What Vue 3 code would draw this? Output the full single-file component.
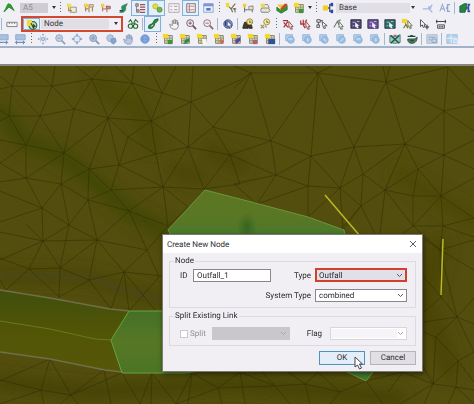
<script setup>
import { h, ref } from 'vue'

const nodeId = ref('Outfall_1')
const nodeType = ref('Outfall')
const systemType = ref('combined')
const split = ref(false)

// Each icon is a list of [path, fill, stroke, width] layers on a 14 by 14 canvas.
const table = (accent, mark = 'M7 8h5v5H7z') => [
  ['M3 3h9v9H3z', '#e4e2b8', '#77755a'],
  ['M3 6h9M3 9h9M6 3v9M9 3v9', 'none', '#8f8d70'],
  ['M1 1h6v5H1z', '#f4d82f', 'none'],
  [mark, accent, 'none'],
]
const blob = (mark) => [
  ['M2 2h8v7H2z', '#b4cfea', '#8fb4da'],
  ['M8 4a4 4 0 1 1 0 8a4 4 0 1 1 0-8z', '#9cc0e4', '#84aed8'],
  [mark, 'none', '#e4f0fb'],
]
const lens = (mark, color, glass) => [
  ['M6 2a4 4 0 1 1 0 8a4 4 0 1 1 0-8z', glass, color],
  ['M9 9l4 4', 'none', color, 2],
  [mark, 'none', color],
]
const frame = (fill) => [
  ['M1 2h12v10H1z', fill, '#2c2a3d'],
  ['M3 5h3M8 4h3M3 9h2', 'none', '#b9b5d8', 1.2],
  ['M6 5l5 4l-2 0l1 3h-2l-1-2l-1 1z', '#f2f1fa', 'none'],
]
const pan = (color, fill) => [
  ['M4 8L2 7l1 4l3 2h4l2-3V5l-1 0v3V3H9v4V2H7v5L6 3H5v6z', fill, color],
]

const icons = {
  arrow: [['M1 11C3 9 4 5 6 2l3 1l4 7l-6-4l-5 5z', '#2f9a2e', '#2b8a2c']],
  newItem: [['M5 6h7v6H5z', '#f3eed2', '#8a8578'], ['M1 2h5v4H1z', '#f4dc4a', 'none'], ['M3 6v4h4', 'none', '#b3952c', 1.3]],
  tree1: [['M3 5v6M7 4v8M11 3v8M3 8h3', 'none', '#a8875a', 1.4], ['M1 2h5v4H1z', '#f0d048', 'none'], ['M7 3h5v3H8z', '#e6cfae', '#b18d5c']],
  tree2: [['M3 5v6M3 8h5M8 4v8', 'none', '#b08a72', 1.4], ['M1 2h4v4H1z', '#f0d048', 'none'], ['M7 5h5v3H8z', '#c98d86', '#a85a54']],
  bird: [['M3 12c5 1 8-2 7-6l2-4l-5 2c-2 1-2 2-1 5z', '#2d8a65', '#3d8d6c'], ['M3 10h4', 'none', '#184e3c', 1.5]],
  list: [['M2 2h3v3H2zM3 9h3v3H3z', '#b8a8a0', '#80706c'], ['M3 5v5', 'none', '#777'], ['M7 3h6M7 6h6M7 9h6M7 12h6', 'none', '#a04e52', 1.4]],
  shapes: [['M5 2a3 3 0 1 1 0 6a3 3 0 1 1 0-6z', '#e0e03a', '#b8bd40'], ['M10 6a3 3 0 1 1 0 6a3 3 0 1 1 0-6z', '#6db54b', '#5b9a45']],
  panel: [['M1 2h12v10H1z', '#f5f2f6', '#aaa0a8'], ['M3 5h2M7 5h4M3 9h2M7 9h4', 'none', '#a98a90']],
  report: [['M2 2h10v10H2z', '#f6eeee', '#77646a'], ['M5 3v8', 'none', '#77646a'], ['M3 5h1M6 5h5M3 9h1M6 9h5', 'none', '#b27b80']],
  window: [['M2 2h11v10H2z', '#e8eefa', '#8a9ed0'], ['M2 2h11v3H2z', '#7b96d4', 'none'], ['M5 7h5v3H5z', '#5479c2', 'none']],
  linkA: [['M3 4l4 4l2 4M7 8l5-6M9 8h4M11 7l1 5', 'none', '#746d52', 1.3], ['M1 1h4v5H1z', '#f3d738', 'none']],
  linkB: [['M3 12V6M3 9h8M12 4v8', 'none', '#77756e', 1.3], ['M1 2h4v4H1z', '#eed237', 'none'], ['M8 5h5v4H8z', '#e4e2d6', '#88877c']],
  stack: [['M3 7h8l2 3l-2 2H3l-1-2z', '#e6e2d4', '#7b776c'], ['M7 3h3l2 4', 'none', '#7b776c'], ['M2 2h5v4H2z', '#f0d84b', 'none']],
  flag: [['M1 6l5 4l7-6v5l-7 4l-5-3z', '#2f9a35', '#34742b'], ['M1 3h8l-3 5z', '#f0ca2c', 'none'], ['M5 8l5-6h3v2l-7 6z', '#d2432d', 'none']],
  tableGreen: table('#3a9739'),
  tableTeal: table('#248c4d', 'M6 13l1-5l5-2v4z'),
  tableHand: table('#f8f7f0', 'M7 7h5l1 6H8z'),
  tableRed: table('#c5715a', 'M10 7l3 3l-3 3l-3-3z'),
  tableNote: table('#5545a5', 'M6 8l6-3v4l-5 4z'),
  tableRose: table('#ad6078'),
  tableBlue: table('#2b5597', 'M5 7h8v6H5z'),
  base: [['M6 7h3M9 7V3h3M9 7v4h3', 'none', '#50516b', 1.6], ['M1 4h6v6H1z', '#efd128', 'none'], ['M10 1h3v4h-3z', '#2c46ae', 'none'], ['M10 9h3v4h-3z', '#2c46ae', 'none']],
  branch: [['M1 8h7M8 8l4-5M8 8l4 4', 'none', '#a5bade', 1.6], ['M7 5h4v3H7z', '#a8bddd', 'none']],
  branchA: [['M1 11l3-8l3 8M2 8h4', 'none', '#9dadcc', 1.3], ['M8 7h2M10 7V3h3M10 7v4h3', 'none', '#88a7d5', 1.6]],
  branchG: [['M1 5l5-3h3v5L7 12H1z', '#268342', '#1a6333'], ['M8 7h3V3h2M11 7v4h2', 'none', '#3350a0', 2]],
  ruler: [['M1 5h12v5H1z', '#f5f3f5', '#777'], ['M4 5v2M7 5v2M10 5v2', 'none', '#777']],
  pick: [['M8 3a4.500 4.500 0 1 1 0 9a4.500 4.500 0 0 1 0-9z', '#cfe0bd', '#3f6b34', 1.5], ['M1 1h6v7H1z', '#ebdb4b', 'none'], ['M6 5l3 6V7l2 2', 'none', '#244c1c', 1.4]],
  group: [['M2 5l2-3l2 3M8 5l2-3l3 3', 'none', '#286b35', 1.3], ['M4 7a2.500 2.500 0 1 1 0 5a2.500 2.500 0 1 1 0-5zM10 7a2.500 2.500 0 1 1 0 5a2.500 2.500 0 1 1 0-5zM5 6h5', '#e4f0e4', '#296b37', 1.3]],
  pencil: [['M2 12c-1-3 1-5 4-5l3-5l4-1c0 3-2 4-4 5c0 4-3 7-7 6z', '#2b8b43', '#16552a'], ['M5 10l2-2', 'none', '#bfe3c4', 1.2]],
  hand: pan('#8a8583', '#f4f2f4'),
  zoomIn: lens('M4 6h4M6 4v4', '#6b5058', '#f1edf1'),
  zoomOut: lens('M4 6h4', '#8b6570', '#f1edf1'),
  info: [['M7 2a5 5 0 1 1 0 10a5 5 0 1 1 0-10z', '#7c8cbc', '#50649a'], ['M6 3v8l2-2l1 3l2-1l-1-2h2z', '#f5f5fc', '#344070'], ['M4 4v5', 'none', '#2c3c74', 1.5]],
  find: [['M1 11l2-6h3l1 3v4H1zM7 8h4l1 4H8z', '#423b2d', '#28251e'], ['M9 1a3.500 3.500 0 1 1 0 7a3.500 3.500 0 1 1 0-7z', '#f3e38a', '#927f35'], ['M9 3v2h2', 'none', '#57502c']],
  track: [['M2 8l4 4M2 12l4-4M7 9l2 2', 'none', '#a09060', 1.4], ['M9 1a3.500 3.500 0 1 1 0 7a3.500 3.500 0 1 1 0-7z', '#f5e9a4', '#9c8632'], ['M9 3v2h2', 'none', '#57502c']],
  cutA: [['M1 3h6M2 11l5-7M2 5l5 6', 'none', '#a8343c', 1.4], ['M8 4l5 6h-2l1 3h-2l-1-3l-1 1z', '#f6eaea', '#8c3a3e']],
  cutB: [['M2 3v4h5M5 2v6l2 4M9 2L7 5', 'none', '#b03a42', 1.5], ['M8 4l5 6h-2l1 3h-2l-1-3l-1 1z', '#f6eaea', '#8c3a3e']],
  nodesA: [['M1 2h4v3H1zM1 8h3v3H1zM5 3h3M3 5v3', '#e5e2e1', '#4b474d'], ['M7 4l6 5h-3l1 3H9L8 9z', '#fff', '#4b474d']],
  nodesB: [['M1 11l4-7l4 7M5 4l4-2', 'none', '#6a7566', 1.2], ['M7 4l5 6h-2l1 3H9L8 10l-1 1z', '#eef4ea', '#5a6a54']],
  frameA: frame('#4e4770'),
  frameB: frame('#6c50a0'),
  frameC: frame('#267267'),
  pair: [['M3 12l3-5M5 6l3 6', 'none', '#68752e', 1.3], ['M1 1h6v5H1z', '#f0d535', 'none'], ['M8 3l5 6h-2l1 3h-2l-1-3l-1 1z', '#f2efda', '#66603a']],
  cursorPlus: [['M3 2v8l2-2l1 3l2-1l-1-2h2z', '#fff', '#3c3b42'], ['M8 10.500h5M10.500 8v5', 'none', '#3c3b42', 1.4]],
  measure: [['M3 8h8v4H3z', '#eeeaee', '#49464b'], ['M1 4h12M2 2v4M12 2v4M5 9v2M7 9v2M9 9v2', 'none', '#49464b', 1.2]],
  screen: [['M2 2h11v6H2z', '#a9c0de', '#8ba6cc'], ['M1 11h12M3 9v4M11 9v4', 'none', '#6f91c0', 1.3]],
  move: [['M7 5a2 2 0 1 1 0 4a2 2 0 1 1 0-4z', '#c4d3e8', '#8ba6c8'], ['M7 1v2M7 11v2M1 7h2M11 7h2', 'none', '#8ba6c8', 1.8], ['M4 3v8M10 3v8', 'none', '#b4c6de']],
  lensBlue: lens('M4 6h4', '#8c9fbd', '#bfd0e7'),
  target: [['M7 3a4 4 0 1 1 0 8a4 4 0 1 1 0-8z', '#dfe8f4', '#93abcc'], ['M7 1v3M7 10v3M1 7h3M10 7h3', 'none', '#839fc4', 1.6]],
  lensTarget: lens('M6 4v4M4 6h4', '#8497b6', '#a9c2df'),
  globeHand: [['M6 2a4 4 0 1 1 0 8a4 4 0 1 1 0-8z', '#b4cae4', '#93aed0'], ['M7 7l5-1l1 4l-3 3l-3-2z', '#85a3cb', '#7a98c0']],
  handBlue: pan('#8da1c0', '#b8cae2'),
  globe: [['M7 2a5 5 0 1 1 0 10a5 5 0 1 1 0-10z', '#719ada', '#7fa0d6'], ['M4 5h6M4 9h6M7 3v8', 'none', '#8aade4']],
  blobA: blob('M5 7h5'),
  blobB: blob('M8 6v4'),
  blobC: blob('M6 6l4 4'),
  blobD: blob('M6 10l4-4'),
  cross: [['M1 3l5 1l2 0l5-2v9l-5 1H6l-5-1z', '#8fd0c4', '#47766b'], ['M2 3l10 9M12 3L2 12', 'none', '#2a4c46', 1.6], ['M5 2h4L7 5z', '#ca5959', 'none']],
  kettle: [['M2 7h8l3-2c0 4-2 7-6 7s-5-2-5-5z', '#4c7c64', '#244d39'], ['M2 4h9M5 3h3M5 9h4', 'none', '#254b3a', 1.4]],
  sheet: [['M1 2h12v10H1z', '#c6d4e3', '#a8b9cc'], ['M3 5h8M3 8h3M7 7h5v4H7z', 'none', '#88a4c2']],
  cells: [['M1 2h12v10H1z', '#b4d0ea', '#9bbcdc'], ['M1 6h12M6 2v10M9 8h4v3H9z', 'none', '#e3f1fb', 1.2]],
}

const row = (text) => text.split(' ').map((k) => ({ kind: k === '|' ? 'sep' : k === ':' ? 'grip' : k.startsWith('*') ? 'on' : 'icon', name: k.replace('*', '') }))
const topA = row(': newItem tree1 tree2 bird *list *shapes panel *report window : linkA linkB stack flag tableGreen')
const topB = row('branch branchA | branchG')
const midA = row('group | *pencil')
const midB = row('hand zoomIn zoomOut | info | find track : cutA cutB nodesA nodesB frameA frameB frameC pair cursorPlus measure')
const low = row('screen screen : move lensBlue target lensTarget globeHand handBlue globe : tableGreen tableTeal tableHand tableRed tableNote tableRose tableBlue | blobA blobB blobC blobD blobA blobB | cross kettle | sheet | cells')

function draw(t) {
  if (t.kind === 'sep') return h('i', { class: 'sep' })
  if (t.kind === 'grip') return h('i', { class: 'grip' })
  return h('button', { type: 'button', class: ['tool', { on: t.kind === 'on' }], 'aria-label': t.name }, [
    h('svg', { viewBox: '0 0 14 14', class: 'glyph' }, icons[t.name].map(([d, fill, stroke, w]) => h('path', { d, fill, stroke, 'stroke-width': w || 1 }))),
  ])
}
const Tools = (props) => props.items.map(draw)
Tools.props = ['items']

const mesh = [
  'M0 89L12 86L52 86L92 79L132 83L162 93L191 102L240 80L251 73L318 73L386 82L444 111L474 104',
  'M12 86L0 76M12 86L19 66M12 86L9 116L0 110M12 86L40 116L9 116L26 145L0 140M9 116L0 121',
  'M52 86L55 66M52 86L30 66M52 86L40 116L26 145M52 86L74 109L40 116L64 153L26 145L26 178L0 163L26 145',
  'M92 79L76 66M92 79L103 66M92 79L74 109L64 153L108 118L74 109M92 79L108 118L132 83L134 66M132 83L115 66',
  'M132 83L151 121L162 93L149 66M162 93L176 66M191 102L193 66M151 121L191 102L188 147L151 121L108 118L128 137L151 121L156 154L128 137',
  'M191 102L213 127L188 147L230 155L213 127L240 94L251 73M213 127L271 141L230 155L204 189L188 147L163 187L156 154L188 147',
  'M108 118L119 165L128 137M108 118L89 169L64 153L61 184L26 178L64 153M89 169L61 184L88 200L111 190L89 169L119 165L156 154M89 169L88 200',
  'M119 165L111 190L163 187L119 165M163 187L204 189L240 184L230 155M163 187L129 211L111 190M163 187L168 226L129 211L88 200L69 225L42 208L61 184L69 225',
  'M26 178L0 182M26 178L42 208L0 191M42 208L0 222M42 208L43 241L69 225L97 240L129 211L147 250L168 226L188 207L163 187M88 200L97 240',
  'M251 73L234 66M251 73L234 88M251 73L271 141L318 73L311 156L271 141L276 175L311 156L354 147L318 73L332 66M318 73L306 66',
  'M386 82L354 147L405 144L386 82L383 66M386 82L390 66M386 82L448 67L444 111L405 144L444 155L444 111L474 131M448 67L474 95',
  'M311 156L308 186L276 175L230 155M276 175L234 184L257 204L276 175M308 186L257 204M308 186L308 217M308 186L340 188L311 156M340 188L354 147L363 174L340 188L308 217M340 188L361 206L363 174L405 144L385 190L363 174',
  'M405 144L418 169L444 155L474 140M444 155L474 169M444 155L441 196L418 169L385 190L361 206L340 230M385 190L413 196L418 169M413 196L441 196L474 178M413 196L413 226L441 196L443 226L413 226L385 190L380 234M441 196L474 218L443 226L474 237M443 226L440 250L413 226L402 234',
  'M340 188L343 230L361 206L375 234M423 238L440 250L474 240M440 250L474 270M440 250L457 317L474 298M423 276L441 297L440 250M423 313L441 297L457 317L423 322M457 317L474 324M457 317L436 337L423 332M457 317L474 352M436 337L458 361L474 352M436 337L433 384L458 361L474 382M458 361L456 387L433 384L423 366M456 387L474 404M456 387L448 404M433 384L424 404M456 387L474 390',
  'M0 260L43 241L29 269L0 258M0 232L43 241L26 224M43 241L60 268L29 269L6 290L0 280M29 269L59 297L60 268L97 240L43 241M60 268L89 280L59 297M60 268L69 225M97 240L124 272L89 280L97 240L147 250L124 272L162 276M89 280L111 309L124 272L129 311L159 277L147 250M124 272L155 310',
  'M0 381L50 359L71 395L104 370L111 404M50 359L41 390L0 380M41 390L0 404M41 390L44 404M41 390L71 395L60 404M71 395L78 404M71 395L122 373L140 404L152 373L151 404M152 373L176 404L192 373L218 388L176 404',
  'M192 373L188 404M218 388L222 404M218 388L240 372L275 386L218 388M240 372L245 404M275 386L262 372M275 386L290 404M275 386L305 384L288 372M305 384L318 372L340 392L305 384L310 404M340 392L330 404M340 392L366 381L383 404M366 381L403 372L433 384L400 404M403 372L388 392',
].join('')
</script>

<template>
  <main class="app">
    <header class="toolbars">
      <div class="bar">
        <Tools :items="[{ kind: 'icon', name: 'arrow' }]" />
        <div class="combo size">
          <select aria-label="Size" disabled><option>A5</option></select>
          <svg class="tri" viewBox="0 0 6 4"><path d="M1 0h4L3 3z" /></svg>
        </div>
        <Tools :items="topA" />
        <svg class="tri" viewBox="0 0 6 4"><path d="M1 0h4L3 3z" /></svg>
        <Tools :items="[{ kind: 'grip' }, { kind: 'icon', name: 'base' }]" />
        <div class="combo scenario">
          <select aria-label="Scenario"><option>Base</option></select>
          <svg class="tri" viewBox="0 0 6 4"><path d="M1 0h4L3 3z" /></svg>
        </div>
        <Tools :items="topB" />
      </div>
      <div class="bar">
        <Tools :items="[{ kind: 'sep' }, { kind: 'icon', name: 'ruler' }]" />
        <div class="combo object">
          <Tools :items="[{ kind: 'on', name: 'pick' }]" />
          <select aria-label="Object"><option>Node</option></select>
          <svg class="tri" viewBox="0 0 6 4"><path d="M1 0h4L3 3z" /></svg>
        </div>
        <Tools :items="midA" />
        <i class="space"></i>
        <Tools :items="midB" />
      </div>
      <div class="bar low"><Tools :items="low" /></div>
    </header>
    <div class="strip"></div>

    <section class="map">
      <svg class="terrain" viewBox="0 66 474 338" preserveAspectRatio="xMinYMin slice">
        <defs>
          <filter id="soft" x="-50%" y="-50%" width="200%" height="200%"><feGaussianBlur stdDeviation="7" /></filter>
          <linearGradient id="pond" gradientUnits="userSpaceOnUse" x1="0" y1="190" x2="0" y2="240">
            <stop offset="0" stop-color="#5c7623" /><stop offset=".6" stop-color="#587724" /><stop offset="1" stop-color="#437a30" />
          </linearGradient>
          <radialGradient id="shade">
            <stop offset="0" stop-color="#2c5c1e" stop-opacity=".7" /><stop offset="1" stop-color="#2c5c1e" stop-opacity="0" />
          </radialGradient>
          <linearGradient id="outlet" x1="0" y1="0" x2="0" y2="1">
            <stop offset="0" stop-color="#447027" /><stop offset=".5" stop-color="#567825" /><stop offset="1" stop-color="#4c7425" />
          </linearGradient>
          <linearGradient id="channel" x1="0" y1="0" x2="0" y2="1">
            <stop offset="0" stop-color="#3f4f0d" /><stop offset=".5" stop-color="#525406" /><stop offset="1" stop-color="#575707" />
          </linearGradient>
        </defs>
        <path d="M0 66h474v338H0z" fill="#534e0d" />
        <g filter="url(#soft)" fill="none" stroke-linecap="round">
          <path d="M0 110L25 142L62 156L98 185L130 212L165 232" stroke="#384109" stroke-width="15" opacity=".7" />
          <path d="M100 85L140 110L152 145" stroke="#403f09" stroke-width="18" opacity=".5" />
          <path d="M175 170L200 178M210 150L240 165" stroke="#433b08" stroke-width="16" opacity=".5" />
          <path d="M0 275L90 278L160 300" stroke="#443f0a" stroke-width="12" opacity=".7" />
          <path d="M0 382L90 392L230 384L400 398" stroke="#3b3d09" stroke-width="13" opacity=".7" />
          <path d="M440 245L425 300L450 370" stroke="#444009" stroke-width="20" opacity=".55" />
          <path d="M400 175L474 220" stroke="#47440b" stroke-width="16" opacity=".5" />
        </g>
        <path :d="mesh" fill="none" stroke="#2f2b05" opacity=".5" />
        <path d="M0 290L50 298L110 309L129 311L111 340L122 372L105 370L50 359L0 352z" fill="url(#channel)" />
        <path d="M0 290L50 298L110 309L129 311M0 352L50 359L105 370L122 372" fill="none" stroke="#6f704a" stroke-width="1.5" />
        <path d="M0 321L50 329L95 339L111 340" fill="none" stroke="#687a1a" />
        <path d="M129 311H200V371L185 373H122L111 340z" fill="url(#outlet)" stroke="#67a53e" />
        <path d="M168 230L205 190L240 199L308 217L344 230L374 371L366 381L345 371L180 250z" fill="url(#pond)" stroke="#6b963e" />
        <ellipse cx="247" cy="227" rx="10" ry="14" fill="url(#shade)" />
        <path d="M325 195L360 236M443 239L441 295" fill="none" stroke="#bcb924" stroke-width="1.5" />
      </svg>

      <form class="dialog" role="dialog" aria-labelledby="dialog-title" @submit.prevent>
        <div class="titlebar">
          <h1 id="dialog-title">Create New Node</h1>
          <button type="button" class="close" aria-label="Close">
            <svg viewBox="0 0 8 8"><path d="M1 1l6 6M7 1L1 7" /></svg>
          </button>
        </div>
        <div class="body">
          <fieldset>
            <legend>Node</legend>
            <div class="fields node">
              <label for="id">ID</label>
              <input id="id" v-model="nodeId" type="text" />
              <label class="right" for="type">Type</label>
              <div class="drop picked">
                <select id="type" v-model="nodeType"><option>Outfall</option></select>
                <svg class="chev" viewBox="0 0 7 5"><path d="M1 1l2.500 2.500L6 1" /></svg>
              </div>
              <label class="right wide" for="system">System Type</label>
              <div class="drop">
                <select id="system" v-model="systemType"><option>combined</option></select>
                <svg class="chev" viewBox="0 0 7 5"><path d="M1 1l2.500 2.500L6 1" /></svg>
              </div>
            </div>
          </fieldset>
          <fieldset>
            <legend>Split Existing Link</legend>
            <div class="fields link">
              <label class="check"><input v-model="split" type="checkbox" disabled />Split</label>
              <div class="drop grey">
                <select aria-label="Link" disabled><option></option></select>
                <svg class="chev" viewBox="0 0 7 5"><path d="M1 1l2.500 2.500L6 1" /></svg>
              </div>
              <label class="right flag" for="flag">Flag</label>
              <div class="drop pale">
                <select id="flag" disabled><option></option></select>
                <svg class="chev" viewBox="0 0 7 5"><path d="M1 1l2.500 2.500L6 1" /></svg>
              </div>
            </div>
          </fieldset>
          <div class="actions">
            <button type="submit" class="btn primary">OK
              <svg class="pointer" viewBox="0 0 9 14"><path d="M1 1v10l2.500-2l2 4l2-1l-2-4h3z" /></svg>
            </button>
            <button type="button" class="btn">Cancel</button>
          </div>
        </div>
      </form>
    </section>
  </main>
</template>

<style>
body {
  margin: 0;
}
.tool {
  flex: none;
  width: 17px;
  height: 16px;
  padding: 0;
  border: 1px solid transparent;
  background: none;
  display: grid;
  place-items: center;
}
.tool.on {
  border-color: #7fb0d8;
  background: #e6eff9;
}
.glyph {
  display: block;
  width: 12px;
  height: 12px;
}
.sep {
  flex: none;
  width: 1px;
  height: 12px;
  margin: 0 1px;
  background: #a3b8cb;
}
.grip {
  flex: none;
  width: 1px;
  height: 12px;
  margin: 0 2px 0 3px;
  background: repeating-linear-gradient(#66646c 0 1px, transparent 1px 3px);
}
</style>

<style scoped>
.app {
  min-height: 100vh;
  display: flex;
  flex-direction: column;
  overflow: hidden;
  font-family: Roboto, "Liberation Sans", sans-serif;
  font-size: 8px;
  text-rendering: geometricPrecision;
  color: #2b2a30;
}
.toolbars {
  background: #f1eff6;
  border-bottom: 2px solid #a4b2c8;
}
.bar {
  display: flex;
  align-items: center;
  height: 16px;
}
.bar.low {
  height: 14px;
  margin-left: -6px;
}
.space {
  flex: none;
  width: 4px;
}
.strip {
  height: 16px;
  background: #f3f0f6;
  border-bottom: 2px solid #88867f;
}
.combo {
  flex: none;
  display: flex;
  align-items: center;
}
.combo select {
  flex: 1;
  min-width: 0;
  height: 10px;
  padding: 0 3px;
  appearance: none;
  border: 0;
  border-radius: 0;
  background: #e1dfe5;
  font: inherit;
  line-height: 10px;
  text-rendering: inherit;
  color: #38363c;
}
.combo select:disabled {
  background: #cfcdd2;
  color: #8d8b91;
  opacity: 1;
}
.tri {
  flex: none;
  width: 6px;
  height: 4px;
  fill: #38363c;
}
.size {
  width: 37px;
  margin: 0 0 0 3px;
  gap: 3px;
}
.scenario {
  width: 80px;
  margin: 0 3px 0 0;
}
.object {
  box-sizing: border-box;
  width: 102px;
  height: 16px;
  margin: 0 1px;
  padding-right: 2px;
  gap: 1px;
  border: 2px solid #d2492f;
}
.object select {
  margin-right: 3px;
}
.object :deep(.tool) {
  height: 12px;
}
.map {
  position: relative;
  flex: 1;
  min-height: 320px;
  background: #534e0d;
  overflow: hidden;
}
.terrain {
  position: absolute;
  inset: 0;
  width: 100%;
  height: 100%;
}
.dialog {
  position: absolute;
  left: 162px;
  top: 168px;
  box-sizing: border-box;
  width: 261px;
  border: 1px solid #7c7b70;
  background: #f1eff4;
  box-shadow: 1px 2px 5px rgba(0, 0, 0, 0.5);
}
.titlebar {
  display: flex;
  align-items: center;
  justify-content: space-between;
  height: 18px;
  padding: 0 5px 0 4px;
  background: #fff;
}
h1 {
  margin: 0;
  font-size: 8px;
  font-weight: 400;
}
.close {
  width: 8px;
  height: 8px;
  padding: 0;
  border: 0;
  background: none;
}
.close svg {
  display: block;
}
.close path,
.chev path {
  fill: none;
  stroke: #5c5a60;
}
.body {
  padding: 3px 6px 6px;
}
fieldset {
  min-width: 0;
  margin: 0 0 3px;
  padding: 0 8px 5px 10px;
  border: 1px solid #dddbe2;
}
legend {
  margin-left: -6px;
  padding: 0 1px;
  line-height: 10px;
}
.fields {
  display: grid;
  align-items: center;
}
.node {
  grid-template-columns: 13px 78px 1fr 92px;
  row-gap: 7px;
  padding-top: 2px;
}
.link {
  grid-template-columns: 32px 78px 1fr 77px;
  padding-top: 6px;
}
.right {
  padding-right: 4px;
  text-align: right;
}
.wide {
  grid-column: 1 / 4;
}
.flag {
  padding-right: 8px;
}
.fields input[type='text'],
.drop {
  box-sizing: border-box;
  height: 13px;
  border: 1px solid #89878d;
  background: #fff;
}
.fields input[type='text'] {
  width: 100%;
  padding: 0 3px;
  font: inherit;
  text-rendering: inherit;
  color: inherit;
}
.drop {
  display: flex;
  align-items: center;
  padding-right: 2px;
}
.drop select {
  flex: 1;
  min-width: 0;
  height: 9px;
  padding: 0 3px;
  appearance: none;
  border: 0;
  background: transparent;
  font: inherit;
  line-height: 9px;
  text-rendering: inherit;
  color: inherit;
}
.drop.picked {
  height: 14px;
  border: 2px solid #d2402c;
  background: #e1e0e6;
}
.drop.picked select {
  padding: 0 2px;
}
.chev {
  flex: none;
  width: 7px;
  height: 5px;
}
.drop.grey {
  border-color: #c9c7cc;
  background: #c9c7cc;
}
.drop.pale {
  border-color: #d8d6dc;
}
.drop.pale select {
  background: #f1eff3;
}
.grey path,
.pale path {
  stroke: #aaa8ae;
}
.check {
  display: flex;
  align-items: center;
  gap: 2px;
  color: #929096;
}
.check input {
  appearance: none;
  width: 8px;
  height: 8px;
  margin: 0;
  border: 1px solid #cbc9cf;
  background: #fff;
  box-sizing: border-box;
}
.actions {
  display: flex;
  justify-content: flex-end;
  gap: 5px;
  padding-top: 2px;
}
.btn {
  position: relative;
  box-sizing: border-box;
  width: 46px;
  height: 14px;
  padding: 0;
  border: 1px solid #b5b3b9;
  background: #e1dfe4;
  font: inherit;
  line-height: 10px;
  text-rendering: inherit;
  color: inherit;
}
.btn.primary {
  border-color: #4e92c0;
  background: #e3eef8;
}
.pointer {
  position: absolute;
  left: 34px;
  top: 4px;
  width: 9px;
  height: 14px;
  fill: #fff;
  stroke: #45434a;
}
</style>
